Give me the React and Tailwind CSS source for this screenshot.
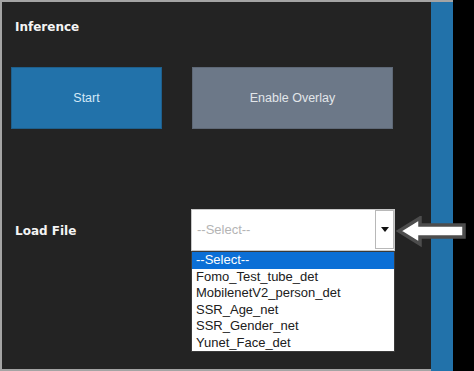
import React from "react";

const items = [
  "--Select--",
  "Fomo_Test_tube_det",
  "MobilenetV2_person_det",
  "SSR_Age_net",
  "SSR_Gender_net",
  "Yunet_Face_det",
];

export default function App() {
  return (
    <div className="relative flex w-[474px] h-[371px] bg-black overflow-hidden">
      <div className="flex flex-1 border-t-2 border-[#a4a4a4]">
        <div className="flex-1 flex flex-col bg-[#232323] border-l-2 border-b-2 border-[#a4a4a4] pl-[9px]">
          <div
            className="pl-[4px] pt-[17px] text-[12px] leading-[16px] font-bold text-[#f4f4f4]"
            style={{ fontFamily: '"DejaVu Sans", Verdana, sans-serif' }}
          >
            Inference
          </div>
          <div
            className="flex gap-[30px] mt-[32px]"
            style={{ fontFamily: '"Liberation Sans", Arial, sans-serif' }}
          >
            <div className="w-[151px] h-[62px] bg-[#2272aa] border border-[#1e5f8c] flex items-center justify-center text-[12.5px] text-[#d3e9f8]">
              Start
            </div>
            <div className="w-[201px] h-[62px] bg-[#6c7888] border border-[#5e6876] flex items-center justify-center text-[12.5px] text-[#e2e6ea]">
              Enable Overlay
            </div>
          </div>
          <div className="flex mt-[80px]">
            <div
              className="w-[180px] pl-[4px] pt-[14px] text-[12px] leading-[16px] font-bold text-[#f4f4f4]"
              style={{ fontFamily: '"DejaVu Sans", Verdana, sans-serif' }}
            >
              Load File
            </div>
            <div
              className="flex flex-col w-[204px]"
              style={{ fontFamily: '"Liberation Sans", Arial, sans-serif' }}
            >
              <div className="h-[42px] bg-white border border-[#c8c8c8] flex items-stretch">
                <div className="flex-1 flex items-center pl-[5px] text-[13px] text-[#b4b4b4]">
                  --Select--
                </div>
                <div className="w-[19px] mb-[1px] border border-[#b8b8b8] bg-white flex items-center justify-center">
                  <svg width="8" height="5" viewBox="0 0 8 5">
                    <polygon points="0,0 8,0 4,5" fill="#111" />
                  </svg>
                </div>
              </div>
              <div className="bg-white border border-[#3a3a3a] h-[101px] flex flex-col">
                {items.map((it, i) => (
                  <div
                    key={it}
                    className={
                      "h-[16.5px] leading-[16.5px] pl-[4px] text-[13px] " +
                      (i === 0 ? "bg-[#0b6fd6] text-white" : "text-[#202020]")
                    }
                  >
                    {it}
                  </div>
                ))}
              </div>
            </div>
          </div>
        </div>
        <div className="w-[22px] bg-[#2272aa]" />
      </div>
      <div className="w-[21px] bg-black" />
      <svg
        className="absolute left-[396px] top-[216px]"
        width="72"
        height="32"
        viewBox="0 0 72 32"
      >
        <polygon
          points="3,15 24,2 24,9 68,9 68,21 24,21 24,28"
          fill="#ffffff"
          stroke="#4d4d4d"
          strokeWidth="3.5"
          strokeLinejoin="miter"
        />
      </svg>
    </div>
  );
}
